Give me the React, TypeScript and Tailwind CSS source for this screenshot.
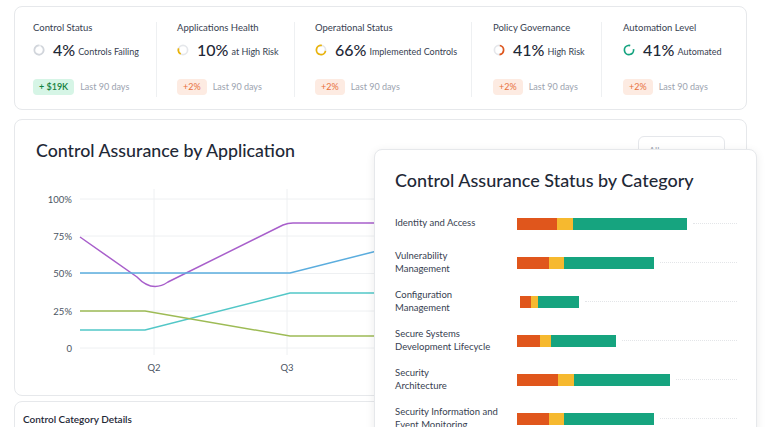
import React from "react";

const C = 28.27;
function Ring({ color, pct, rot, track = "#e5e7eb" }: { color: string; pct: number; rot: number; track?: string }) {
  return (
    <svg width="12" height="12" viewBox="0 0 12 12" className="shrink-0">
      <circle cx="6" cy="6" r="4.6" fill="none" stroke={track} strokeWidth="1.7" />
      <circle
        cx="6"
        cy="6"
        r="4.6"
        fill="none"
        stroke={color}
        strokeWidth="1.7"
        strokeDasharray={`${pct * C} ${C}`}
        transform={`rotate(${rot} 6 6)`}
      />
    </svg>
  );
}

type Stat = {
  label: string;
  value: string;
  suffix: string;
  badge: string;
  green?: boolean;
  ring: React.ReactNode;
  w: string;
};

const stats: Stat[] = [
  { label: "Control Status", value: "4%", suffix: "Controls Failing", badge: "+ $19K", green: true, ring: <Ring color="#d1d5db" pct={0.9} rot={-60} />, w: "w-[124px]" },
  { label: "Applications Health", value: "10%", suffix: "at High Risk", badge: "+2%", ring: <Ring color="#eab308" pct={0.22} rot={120} />, w: "w-[138px] pl-[20px]" },
  { label: "Operational Status", value: "66%", suffix: "Implemented Controls", badge: "+2%", ring: <Ring color="#eab308" pct={0.75} rot={10} />, w: "w-[177px] pl-[20px]" },
  { label: "Policy Governance", value: "41%", suffix: "High Risk", badge: "+2%", ring: <Ring color="#e0561c" pct={0.45} rot={-80} />, w: "w-[130px] pl-[21px]" },
  { label: "Automation Level", value: "41%", suffix: "Automated", badge: "+2%", ring: <Ring color="#14a37f" pct={0.82} rot={-10} track="#ffffff" />, w: "w-[120px] pl-[21px]" },
];

const rows = [
  { label: ["Identity and Access"], r: 40, y: 16, g: 114, ml: "" },
  { label: ["Vulnerability", "Management"], r: 32, y: 15, g: 90, ml: "" },
  { label: ["Configuration", "Management"], r: 11, y: 7, g: 41, ml: "ml-[3px]" },
  { label: ["Secure Systems", "Development Lifecycle"], r: 23, y: 11, g: 65, ml: "" },
  { label: ["Security", "Architecture"], r: 41, y: 16, g: 96, ml: "" },
  { label: ["Security Information and", "Event Monitoring"], r: 32, y: 15, g: 90, ml: "" },
];

export default function App() {
  return (
    <div className="relative w-[768px] h-[427px] overflow-hidden bg-white font-['Lato',sans-serif] text-[#1f2937]">
      {/* Top stats card */}
      <div className="ml-[14px] mt-[6px] w-[733px] h-[104px] border border-[#e6e8eb] rounded-lg flex pl-[18px] pt-[15px]">
        {stats.map((s, i) => (
          <div
            key={s.label}
            className={`${s.w} h-[75px] flex flex-col ${i < stats.length - 1 ? "border-r border-[#eef0f2]" : ""}`}
          >
            <div className="text-[9.5px] leading-[12px] text-[#374151]">{s.label}</div>
            <div className="mt-[8px] flex items-center h-[16px]">
              {s.ring}
              <span className="ml-[8px] text-[16px] leading-[16px] font-medium text-[#1f2937]">{s.value}</span>
              <span className="ml-[3px] mt-[3px] text-[9px] text-[#374151]">{s.suffix}</span>
            </div>
            <div className="mt-auto mb-[2px] flex items-center">
              <span
                className={`h-[16px] px-[6px] flex items-center text-[9px] rounded-sm ${
                  s.green ? "bg-[#d6f5e6] text-[#15803d] font-semibold" : "bg-[#fdebe2] text-[#e8703a]"
                }`}
              >
                {s.badge}
              </span>
              <span className="ml-[6px] text-[9px] text-[#9ca3af]">Last 90 days</span>
            </div>
          </div>
        ))}
      </div>

      {/* Chart card */}
      <div className="ml-[14px] mt-[9px] w-[733px] h-[277px] border border-[#e6e8eb] rounded-lg">
        <div className="flex items-start justify-between pt-[16px] pl-[21px] pr-[21px]">
          <div className="text-[17.8px] leading-[28px] font-medium text-[#1f2937]">Control Assurance by Application</div>
          <div className="w-[87px] h-[30px] border border-[#e5e7eb] rounded-md pl-[10px] pt-[7px] text-[9px] text-[#9ca3af]">All</div>
        </div>
        <svg width="731" height="200" viewBox="0 0 731 200" className="mt-[19px] block">
          {[14, 51, 88.5, 126, 163].map((y) => (
            <line key={y} x1="65" x2="720" y1={y} y2={y} stroke="#eef0f2" strokeWidth="1" />
          ))}
          <line x1="139" x2="139" y1="4" y2="170" stroke="#eef0f2" />
          <line x1="272" x2="272" y1="4" y2="170" stroke="#eef0f2" />
          {[
            ["100%", 14],
            ["75%", 51],
            ["50%", 88.5],
            ["25%", 126],
            ["0", 163],
          ].map(([t, y]) => (
            <text key={t as string} x="57" y={(y as number) + 3.5} textAnchor="end" fontSize="9.5" fill="#4b5563">
              {t}
            </text>
          ))}
          <text x="139" y="186" textAnchor="middle" fontSize="9.5" fill="#4b5563">Q2</text>
          <text x="272" y="186" textAnchor="middle" fontSize="9.5" fill="#4b5563">Q3</text>
          <path d="M65,52 L122,92 Q137,108 153,97 L268,40 Q273,38 278,38 L720,38" fill="none" stroke="#a85fcb" strokeWidth="1.5" />
          <path d="M65,88 L275,88 L358,67 L420,52" fill="none" stroke="#5badde" strokeWidth="1.5" />
          <path d="M65,145 L130,145 L275,108 L720,108" fill="none" stroke="#52c7c7" strokeWidth="1.5" />
          <path d="M65,126 L130,126 L275,151 L720,151" fill="none" stroke="#9dbb55" strokeWidth="1.5" />
        </svg>
      </div>

      {/* Bottom card */}
      <div className="ml-[14px] mt-[5px] w-[733px] h-[60px] border border-[#e6e8eb] rounded-lg pt-[10px] pl-[8px]">
        <div className="text-[10px] leading-[14px] font-semibold text-[#1f2937]">Control Category Details</div>
      </div>

      {/* Overlay card */}
      <div className="absolute left-[374px] top-[149px] w-[383px] h-[300px] bg-white rounded-lg border border-[#e6e8eb] shadow-[0_2px_10px_rgba(0,0,0,0.08)] pl-[20px] pr-[19px] pt-[16px]">
        <div className="text-[18px] leading-[28px] font-medium text-[#1f2937]">Control Assurance Status by Category</div>
        <div className="mt-[10px] flex flex-col">
          {rows.map((r) => (
            <div key={r.label[0]} className="h-[39px] flex items-center">
              <div className="w-[122px] shrink-0 text-[9.5px] leading-[12.5px] text-[#374151]">
                {r.label.map((l) => (
                  <div key={l}>{l}</div>
                ))}
              </div>
              <div className={`flex-1 flex items-center ${r.ml}`}>
                <div className="h-[12px] bg-[#e0561c]" style={{ width: r.r }} />
                <div className="h-[12px] bg-[#f6b92f]" style={{ width: r.y }} />
                <div className="h-[12px] bg-[#16a47f]" style={{ width: r.g }} />
                <div className="flex-1 ml-[6px] border-t border-dotted border-[#e3e5e8]" />
              </div>
            </div>
          ))}
        </div>
      </div>
    </div>
  );
}
